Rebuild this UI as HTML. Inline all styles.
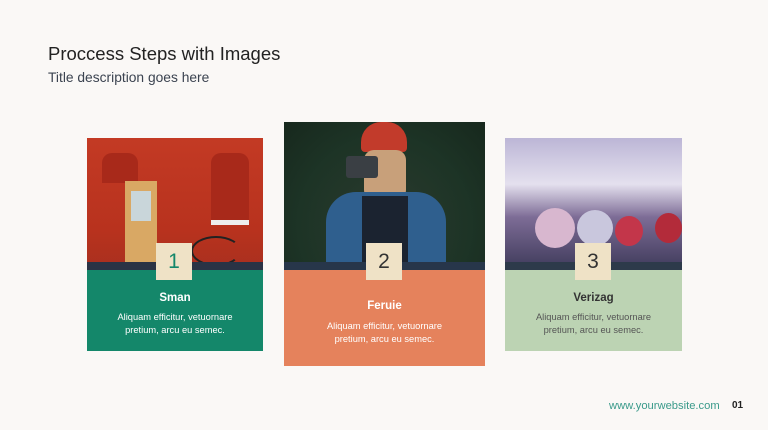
<!DOCTYPE html>
<html><head><style>
body{margin:0;width:768px;height:430px;background:#faf8f6;font-family:"Liberation Sans",sans-serif;position:relative;overflow:hidden}
.a{position:absolute}
.t{left:48px;top:43px;font-size:18.5px;color:#222;font-weight:normal}
.s{left:48px;top:70px;font-size:13.8px;color:#3b4350}
.num{position:absolute;background:#efe2c6;width:36px;height:37px;font-size:21px;text-align:center;line-height:37px;color:#333;font-weight:300}
.h{position:absolute;width:100%;text-align:center;font-size:11.5px;font-weight:600;color:#fff}
.p{position:absolute;width:100%;text-align:center;font-size:9.3px;line-height:13px;color:#fff}
</style></head><body>
<div class="a t">Proccess Steps with Images</div>
<div class="a s">Title description goes here</div>

<div class="a" style="left:87px;top:138px;width:176px;height:132px;background:linear-gradient(180deg,#c33a24,#b8321e 70%,#a9301f);overflow:hidden">
 <div class="a" style="left:15px;top:15px;width:36px;height:30px;background:#a8291a;border-radius:10px 10px 0 0"></div>
 <div class="a" style="left:38px;top:43px;width:32px;height:82px;background:#d9a864"></div>
 <div class="a" style="left:44px;top:53px;width:20px;height:30px;background:#c9d6da"></div>
 <div class="a" style="left:124px;top:15px;width:38px;height:70px;background:#a8291a;border-radius:10px 10px 0 0"></div>
 <div class="a" style="left:124px;top:82px;width:38px;height:5px;background:#eee"></div>
 <div class="a" style="left:104px;top:98px;width:50px;height:30px;border:2px solid #222;border-radius:50%;box-sizing:border-box;border-color:#222 transparent #222 #222"></div>
 <div class="a" style="left:0;top:124px;width:176px;height:8px;background:#2a3345"></div>
</div>
<div class="a" style="left:87px;top:270px;width:176px;height:81px;background:#14876a">
 <div class="h" style="top:22px">Sman</div>
 <div class="p" style="top:41px">Aliquam efficitur, vetuornare<br>pretium, arcu eu semec.</div>
</div>
<div class="num" style="left:156px;top:243px;color:#14876a">1</div>

<div class="a" style="left:284px;top:122px;width:201px;height:148px;background:radial-gradient(ellipse at 50% 70%,#2b3a2e,#1d3426 60%,#17281d);overflow:hidden">
 <div class="a" style="left:77px;top:0;width:46px;height:30px;background:#c23b2b;border-radius:20px 20px 4px 4px"></div>
 <div class="a" style="left:80px;top:28px;width:42px;height:50px;background:#c8a07a;border-radius:10px"></div>
 <div class="a" style="left:62px;top:34px;width:32px;height:22px;background:#3a3f44;border-radius:3px"></div>
 <div class="a" style="left:42px;top:70px;width:120px;height:78px;background:#2f5f8e;border-radius:30px 30px 0 0"></div>
 <div class="a" style="left:78px;top:74px;width:46px;height:74px;background:#1b2330"></div>
 <div class="a" style="left:0;top:140px;width:201px;height:8px;background:#27364a"></div>
</div>
<div class="a" style="left:284px;top:270px;width:201px;height:96px;background:#e5825c">
 <div class="h" style="top:30px">Feruie</div>
 <div class="p" style="top:50px">Aliquam efficitur, vetuornare<br>pretium, arcu eu semec.</div>
</div>
<div class="num" style="left:366px;top:243px">2</div>

<div class="a" style="left:505px;top:138px;width:177px;height:132px;background:linear-gradient(180deg,#bcb6d6,#e4e0ee 35%,#7d6c96 60%,#3e3a5a);overflow:hidden">
 <div class="a" style="left:30px;top:70px;width:40px;height:40px;background:#d8b7cf;border-radius:50%"></div>
 <div class="a" style="left:72px;top:72px;width:36px;height:36px;background:#c9c7dd;border-radius:50%"></div>
 <div class="a" style="left:110px;top:78px;width:28px;height:30px;background:#c3364a;border-radius:50%"></div>
 <div class="a" style="left:150px;top:75px;width:27px;height:30px;background:#b32b3a;border-radius:50%"></div>
 <div class="a" style="left:0;top:124px;width:177px;height:8px;background:#2d3a4a"></div>
</div>
<div class="a" style="left:505px;top:270px;width:177px;height:81px;background:#bcd3b3">
 <div class="h" style="top:22px;color:#333">Verizag</div>
 <div class="p" style="top:41px;color:#555">Aliquam efficitur, vetuornare<br>pretium, arcu eu semec.</div>
</div>
<div class="num" style="left:575px;top:243px">3</div>

<div class="a" style="left:609px;top:400px;font-size:11.2px;color:#3a9a8a">www.yourwebsite.com</div>
<div class="a" style="left:732px;top:400px;font-size:10px;font-weight:bold;color:#222">01</div>
</body></html>
